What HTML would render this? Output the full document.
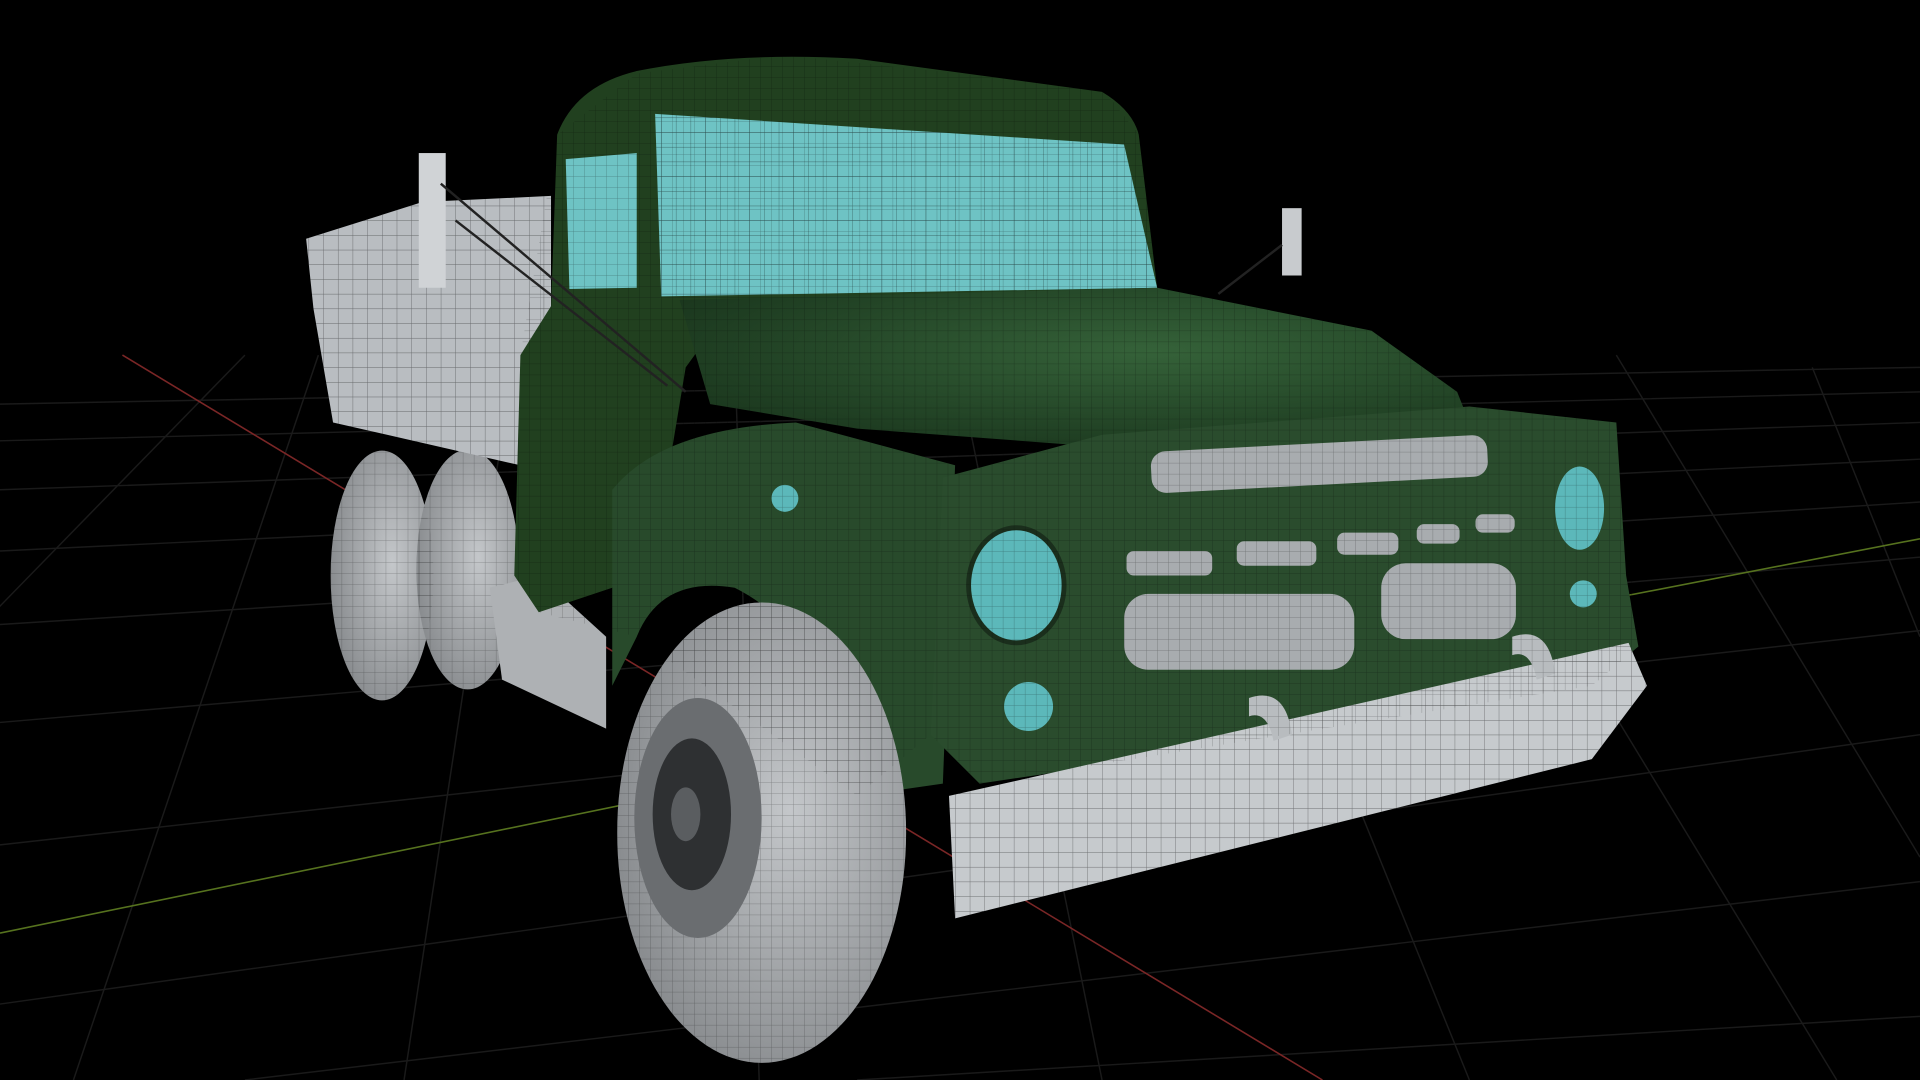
<!DOCTYPE html>
<html><head><meta charset="utf-8"><style>
html,body{margin:0;padding:0;background:#000;width:1920px;height:1080px;overflow:hidden}
svg{display:block}
</style></head><body>
<svg width="1920" height="1080" viewBox="0 0 1568 882" xmlns="http://www.w3.org/2000/svg">
<defs>
<pattern id="mesh" width="9" height="9" patternUnits="userSpaceOnUse">
<path d="M0 0H9M0 0V9" stroke="#000" stroke-opacity="0.35" stroke-width="0.6" fill="none"/>
</pattern>
<pattern id="mesh2" width="12" height="12" patternUnits="userSpaceOnUse">
<path d="M0 0H12M0 0V12" stroke="#000" stroke-opacity="0.45" stroke-width="0.7" fill="none"/>
</pattern>
<radialGradient id="g1" cx="0.6" cy="0.4" r="0.7">
<stop offset="0" stop-color="#356239"/><stop offset="1" stop-color="#1a361d"/>
</radialGradient>
<radialGradient id="tire" cx="0.6" cy="0.45" r="0.6">
<stop offset="0" stop-color="#c4c7ca"/><stop offset="1" stop-color="#8a8d90"/>
</radialGradient>
</defs>
<rect width="1568" height="882" fill="#000"/>
<g stroke="#1a1a1a" stroke-width="1.2" fill="none">
<path d="M0 330L1568 300M0 360L1568 320M0 400L1568 345M0 450L1568 375M0 510L1568 410M0 590L1568 455M0 690L1568 515M0 820L1568 600M200 882L1568 720M700 882L1568 830"/>
<path d="M60 882L260 290M-200 700L200 290M330 882L420 290M620 882L600 290M900 882L780 290M1200 882L960 290M1500 882L1140 290M1568 700L1320 290M1568 520L1480 300"/>
</g>
<path d="M100 290L1080 882" stroke="#7a2626" stroke-width="1.3"/>
<path d="M0 762L520 655M1310 490L1568 440" stroke="#56721e" stroke-width="1.3"/>
<ellipse cx="312" cy="470" rx="42" ry="102" fill="url(#tire)"/>
<ellipse cx="382" cy="465" rx="42" ry="98" fill="url(#tire)"/>
<ellipse cx="312" cy="470" rx="42" ry="102" fill="url(#mesh)"/>
<ellipse cx="382" cy="465" rx="42" ry="98" fill="url(#mesh)"/>
<polygon points="250,195 345,165 450,160 450,250 425,380 272,345 256,252" fill="#b9bdc1"/>
<polygon points="250,195 345,165 450,160 450,250 425,380 272,345 256,252" fill="url(#mesh2)"/>
<rect x="342" y="125" width="22" height="110" fill="#d0d3d6"/>
<polygon points="400,480 440,470 495,520 495,595 410,555" fill="#aeb1b4"/>
<path d="M455 110 Q470 70 520 58 Q600 42 700 48 L900 75 Q925 90 930 110 L945 235 L600 245 L560 300 L540 420 L500 480 L440 500 L420 470 L425 290 L450 250 Z" fill="#21401f"/>
<polygon points="535,93 918,118 945,235 540,242" fill="#6ec3c4"/>
<polygon points="462,130 520,125 520,235 465,236" fill="#6ec3c4"/>
<polygon points="535,93 918,118 945,235 540,242" fill="url(#mesh2)"/>
<polygon points="555,245 945,235 1120,270 1190,320 1200,345 900,365 700,350 580,330" fill="url(#g1)"/>
<path d="M500 400 Q540 350 650 345 L780 380 L770 640 L700 650 Q680 520 600 480 Q540 470 520 520 L500 560 Z" fill="#284a2b"/>
<polygon points="770,390 900,355 1200,332 1320,345 1328,470 1338,528 1300,560 1000,610 800,640 760,600" fill="#2a4c2d"/>
<rect x="940" y="362" width="275" height="34" rx="12" fill="#a8acaf" transform="rotate(-3 1077 379)"/>
<g fill="#a8acaf">
<rect x="920" y="450" width="70" height="20" rx="6"/><rect x="1010" y="442" width="65" height="20" rx="6"/>
<rect x="1092" y="435" width="50" height="18" rx="6"/><rect x="1157" y="428" width="35" height="16" rx="6"/><rect x="1205" y="420" width="32" height="15" rx="6"/>
<rect x="918" y="485" width="188" height="62" rx="20"/><rect x="1128" y="460" width="110" height="62" rx="20"/>
</g>
<ellipse cx="830" cy="478" rx="41" ry="49" fill="#1a2e1c"/>
<ellipse cx="830" cy="478" rx="37" ry="45" fill="#5cb8ba"/>
<ellipse cx="1290" cy="415" rx="20" ry="34" fill="#5cb8ba"/>
<circle cx="840" cy="577" r="20" fill="#5cb8ba"/>
<circle cx="1293" cy="485" r="11" fill="#5cb8ba"/>
<circle cx="641" cy="407" r="11" fill="#5cb8ba"/>
<ellipse cx="622" cy="680" rx="118" ry="188" fill="url(#tire)"/>
<ellipse cx="622" cy="680" rx="118" ry="188" fill="url(#mesh)"/>
<ellipse cx="570" cy="668" rx="52" ry="98" fill="#6a6d70"/>
<ellipse cx="565" cy="665" rx="32" ry="62" fill="#2e3032"/>
<ellipse cx="560" cy="665" rx="12" ry="22" fill="#5a5d60"/>
<polygon points="775,650 1330,525 1345,560 1300,620 780,750" fill="#c6cacd"/>
<polygon points="775,650 1330,525 1345,560 1300,620 780,750" fill="url(#mesh2)"/>
<g fill="#b8bcbf"><path d="M1020 570 q30 -10 35 30 l-15 5 q-5 -25 -20 -20z"/><path d="M1235 520 q30 -10 35 30 l-15 5 q-5 -25 -20 -20z"/></g>
<polygon points="455,110 520,60 640,45 900,72 930,110 945,235 1120,270 1190,320 1320,345 1338,528 1300,560 800,640 760,600 700,650 520,520 440,500 420,470 425,290" fill="url(#mesh)"/>
<rect x="1047" y="170" width="16" height="55" fill="#c8cbce"/>
<path d="M1047 200 L995 240 M360 150 L560 320 M372 180 L545 315" stroke="#222" stroke-width="2"/>
</svg>
</body></html>
